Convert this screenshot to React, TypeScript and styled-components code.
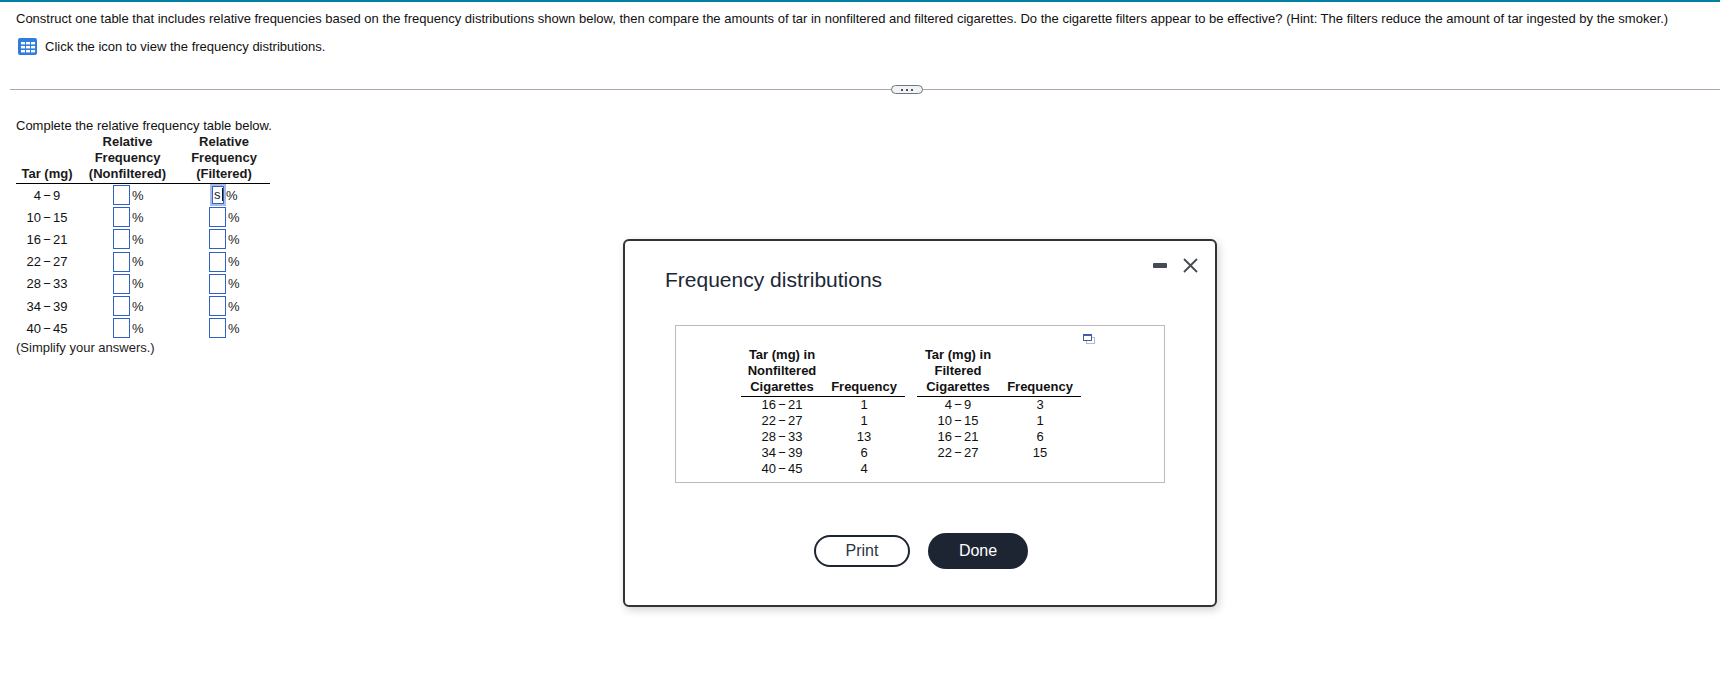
import React from "react";
import styled, { createGlobalStyle } from "styled-components";

const Global = createGlobalStyle`
  html, body { margin: 0; padding: 0; background: #fff; }
  body { font-family: "Liberation Sans", Arial, sans-serif; color: #000; font-size: 13px; }
  #root { width: 1720px; height: 691px; overflow: hidden; position: relative; }
`;

const TopBar = styled.div`
  height: 2px;
  background: #007fa3;
`;
const Question = styled.section`
  padding: 9px 16px 0;
  height: 87px;
  box-sizing: border-box;
`;
const Prompt = styled.p`
  margin: 0;
  font-size: 13px;
  line-height: 16px;
  white-space: nowrap;
  color: #111;
`;
const IconLine = styled.div`
  display: flex;
  align-items: center;
  gap: 8px;
  margin-top: 11px;
  padding-left: 2px;
  font-size: 13px;
  line-height: 16px;
  color: #111;
`;
const Divider = styled.div`
  position: relative;
  margin-left: 10px;
  height: 1px;
  background: #b5a4ab;
`;
const Ellipsis = styled.div`
  position: absolute;
  left: 881px;
  top: -4px;
  width: 32px;
  height: 9px;
  box-sizing: border-box;
  border: 1px solid #6d7580;
  border-radius: 5px;
  background: #f2f3f5;
  display: flex;
  align-items: center;
  justify-content: center;
  gap: 3px;
`;
const Dot = styled.span`
  width: 2px;
  height: 2px;
  background: #4a5260;
`;
const Work = styled.section`
  padding: 28px 0 0 16px;
`;
const Lead = styled.div`
  font-size: 13px;
  line-height: 16px;
  color: #111;
`;
const FreqTable = styled.table`
  border-collapse: collapse;
  table-layout: fixed;
  width: 253px;
`;
const Head = styled.th<{ $w: number }>`
  width: ${(p) => p.$w}px;
  padding: 0 0 1px;
  font-size: 13px;
  font-weight: 700;
  line-height: 16px;
  text-align: center;
  vertical-align: bottom;
  color: #1a1a1a;
  border-bottom: 1px solid #000;
  &:last-child {
    padding-left: 1px;
  }
`;
const RangeCell = styled.td`
  height: 22.2px;
  padding: 0;
  text-align: center;
  font-size: 13px;
  word-spacing: -1.4px;
  color: #111;
`;
const InputCell = styled.td`
  padding: 0;
  height: 22.2px;
`;
const InputWrap = styled.div<{ $pad: number }>`
  display: flex;
  align-items: center;
  gap: 2px;
  padding-left: ${(p) => p.$pad}px;
  font-size: 13px;
  color: #222;
`;
const Blank = styled.div<{ $active?: boolean }>`
  width: 17px;
  height: 20px;
  box-sizing: border-box;
  border: 1px solid #2f62c4;
  background: #fff;
  font-size: 13px;
  line-height: 18px;
  padding-left: 3px;
  ${(p) =>
    p.$active
      ? "outline: 2px solid #a9bbe6; outline-offset: -1px; border: 2px solid #2f62c4; padding-left: 1px; line-height: 16px; width: 14px; margin: 0 -1px 0 2px; white-space: nowrap;"
      : ""}
`;
const Caret = styled.span`
  display: inline-block;
  width: 1px;
  height: 13px;
  background: #111;
  vertical-align: -2px;
  margin-left: 1px;
`;
const Note = styled.div`
  font-size: 13px;
  line-height: 16px;
  margin-top: 1px;
  color: #222;
`;
const Modal = styled.div`
  position: absolute;
  left: 623px;
  top: 239px;
  width: 594px;
  height: 368px;
  box-sizing: border-box;
  border: 2px solid #333;
  border-radius: 6px;
  background: #fff;
  box-shadow: 2px 3px 8px rgba(0, 0, 0, 0.18);
  padding: 26px 0 0 40px;
`;
const ModalHead = styled.div`
  display: flex;
  align-items: center;
  justify-content: space-between;
  height: 26px;
  padding-right: 17px;
`;
const Title = styled.h2`
  margin: 0;
  font-size: 21px;
  font-weight: 400;
  line-height: 26px;
  color: #1c2735;
`;
const WinControls = styled.div`
  display: flex;
  align-items: center;
  gap: 16px;
  margin-top: -30px;
`;
const Minimize = styled.span`
  width: 14px;
  height: 5px;
  background: #444b55;
  border-radius: 1px;
`;
const Frame = styled.div`
  position: relative;
  margin: 32px 0 0 10px;
  width: 490px;
  height: 158px;
  box-sizing: border-box;
  border: 1px solid #bbb;
  padding: 21px 0 0 65px;
  display: flex;
  gap: 12px;
  align-items: flex-start;
`;
const CopyIcon = styled.svg`
  position: absolute;
  left: 407px;
  top: 8px;
`;
const DataTable = styled.table`
  border-collapse: collapse;
  table-layout: fixed;
  width: 164px;
`;
const DataHead = styled.th`
  width: 82px;
  padding: 0 0 1px;
  font-size: 13px;
  font-weight: 700;
  line-height: 16px;
  text-align: center;
  vertical-align: bottom;
  color: #111;
  border-bottom: 1px solid #000;
`;
const DataCell = styled.td`
  padding: 0;
  font-size: 13px;
  line-height: 16px;
  height: 16px;
  text-align: center;
  word-spacing: -1.4px;
  color: #111;
`;
const Actions = styled.div`
  display: flex;
  align-items: center;
  gap: 18px;
  margin: 50px 0 0 149px;
`;
const Pill = styled.button<{ $primary?: boolean }>`
  font-family: "Liberation Sans", Arial, sans-serif;
  font-size: 16px;
  border-radius: 18px;
  box-sizing: border-box;
  padding: 0;
  width: ${(p) => (p.$primary ? 100 : 96)}px;
  height: ${(p) => (p.$primary ? 36 : 32)}px;
  border: ${(p) => (p.$primary ? "none" : "2px solid #1e2532")};
  background: ${(p) => (p.$primary ? "#1e2532" : "#fff")};
  color: ${(p) => (p.$primary ? "#fff" : "#2b3442")};
`;

const TableIcon = () => (
  <svg width="19" height="17" viewBox="0 0 19 17" aria-hidden="true">
    <rect x="0" y="0" width="19" height="17" rx="2" fill="#2f7de1" />
    {[3, 8, 13].map((x) =>
      [4, 8, 12].map((y) => <rect key={`${x}-${y}`} x={x} y={y} width="4" height="2.4" fill="#fff" />)
    )}
  </svg>
);

const ranges = ["4 − 9", "10 − 15", "16 − 21", "22 − 27", "28 − 33", "34 − 39", "40 − 45"];
const left = [["16 − 21", "1"], ["22 − 27", "1"], ["28 − 33", "13"], ["34 − 39", "6"], ["40 − 45", "4"]];
const right = [["4 − 9", "3"], ["10 − 15", "1"], ["16 − 21", "6"], ["22 − 27", "15"]];

const Data = ({ name, rows }: { name: React.ReactNode; rows: string[][] }) => (
  <DataTable>
    <thead>
      <tr>
        <DataHead>{name}</DataHead>
        <DataHead>Frequency</DataHead>
      </tr>
    </thead>
    <tbody>
      {rows.map(([a, b]) => (
        <tr key={a}>
          <DataCell>{a}</DataCell>
          <DataCell>{b}</DataCell>
        </tr>
      ))}
    </tbody>
  </DataTable>
);

export default function App() {
  return (
    <>
      <Global />
      <TopBar />
      <Question>
        <Prompt>
          Construct one table that includes relative frequencies based on the frequency distributions shown below, then compare the amounts of tar in nonfiltered and filtered cigarettes. Do the cigarette filters appear to be effective? (Hint: The filters reduce the amount of tar ingested by the smoker.)
        </Prompt>
        <IconLine>
          <TableIcon />
          Click the icon to view the frequency distributions.
        </IconLine>
      </Question>
      <Divider>
        <Ellipsis>
          <Dot />
          <Dot />
          <Dot />
        </Ellipsis>
      </Divider>
      <Work>
        <Lead>Complete the relative frequency table below.</Lead>
        <FreqTable>
          <thead>
            <tr>
              <Head $w={62}>Tar (mg)</Head>
              <Head $w={99}>Relative<br />Frequency<br />(Nonfiltered)</Head>
              <Head $w={92}>Relative<br />Frequency<br />(Filtered)</Head>
            </tr>
          </thead>
          <tbody>
            {ranges.map((r, i) => (
              <tr key={r}>
                <RangeCell>{r}</RangeCell>
                <InputCell>
                  <InputWrap $pad={35}>
                    <Blank />%
                  </InputWrap>
                </InputCell>
                <InputCell>
                  <InputWrap $pad={32}>
                    {i === 0 ? (
                      <Blank $active>
                        s<Caret />
                      </Blank>
                    ) : (
                      <Blank />
                    )}
                    %
                  </InputWrap>
                </InputCell>
              </tr>
            ))}
          </tbody>
        </FreqTable>
        <Note>(Simplify your answers.)</Note>
      </Work>
      <Modal>
        <ModalHead>
          <Title>Frequency distributions</Title>
          <WinControls>
            <Minimize />
            <svg width="15" height="15" viewBox="0 0 15 15" aria-hidden="true">
              <path d="M1 1 L14 14 M14 1 L1 14" stroke="#444b55" strokeWidth="1.8" fill="none" />
            </svg>
          </WinControls>
        </ModalHead>
        <Frame>
          <CopyIcon width="12" height="10" viewBox="0 0 12 10" aria-hidden="true">
            <rect x="3.5" y="3.5" width="8" height="6" fill="#fff" stroke="#b3b8e0" />
            <rect x="0.5" y="0.5" width="8" height="6" fill="#fff" stroke="#4a5aa8" />
            <rect x="0" y="0" width="9" height="2" fill="#4a5aa8" />
          </CopyIcon>
          <Data name={<>Tar (mg) in<br />Nonfiltered<br />Cigarettes</>} rows={left} />
          <Data name={<>Tar (mg) in<br />Filtered<br />Cigarettes</>} rows={right} />
        </Frame>
        <Actions>
          <Pill>Print</Pill>
          <Pill $primary>Done</Pill>
        </Actions>
      </Modal>
    </>
  );
}
